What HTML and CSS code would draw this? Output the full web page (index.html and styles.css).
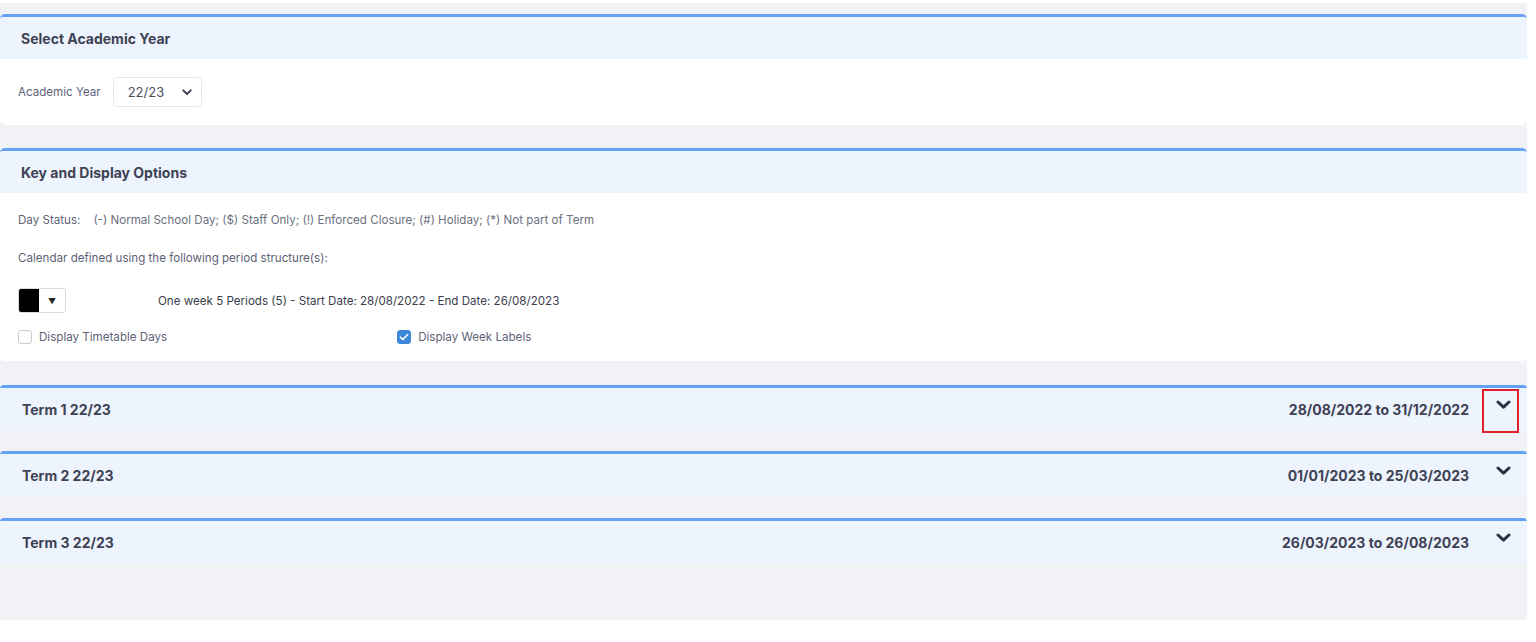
FILE: index.html
```html
<!DOCTYPE html>
<html>
<head>
<meta charset="utf-8">
<link rel="stylesheet" href="styles.css">
</head>
<body>
<div class="page">
  <section class="card card-year">
    <div class="card-head"><h2>Select Academic Year</h2></div>
    <div class="card-body year-body">
      <label class="lbl">Academic Year</label>
      <div class="select">
        <span>22/23</span>
        <svg width="10" height="7" viewBox="0 0 10 7"><path d="M1.2 1.3 L5 5 L8.8 1.3" fill="none" stroke="#3a3f4d" stroke-width="1.8" stroke-linecap="round" stroke-linejoin="round"/></svg>
      </div>
    </div>
  </section>

  <section class="card card-key">
    <div class="card-head"><h2>Key and Display Options</h2></div>
    <div class="card-body key-body">
      <div class="status"><span class="lbl">Day Status:</span><span class="keytext">(-) Normal School Day; ($) Staff Only; (!) Enforced Closure; (#) Holiday; (*) Not part of Term</span></div>
      <div class="lbl cal">Calendar defined using the following period structure(s):</div>
      <div class="struct">
        <div class="swatch"><span class="colour"></span><span class="tri">&#9660;</span></div>
        <span class="desc">One week 5 Periods (5) - Start Date: 28/08/2022 - End Date: 26/08/2023</span>
      </div>
      <div class="checks">
        <label class="chk"><span class="box"></span><span>Display Timetable Days</span></label>
        <label class="chk chk2"><span class="box on"><svg width="10" height="8" viewBox="0 0 10 8"><path d="M1.3 4.2 L3.8 6.5 L8.7 1.5" fill="none" stroke="#fff" stroke-width="1.6" stroke-linecap="round" stroke-linejoin="round"/></svg></span><span>Display Week Labels</span></label>
      </div>
    </div>
  </section>

  <section class="term term1">
    <div class="term-head">
      <h3>Term 1 22/23</h3>
      <span class="dates">28/08/2022 to 31/12/2022</span>
      <span class="chev focus"><svg width="15" height="10" viewBox="0 0 15 10"><path d="M2 2 L7.5 7.2 L13 2" fill="none" stroke="#2b3042" stroke-width="3" stroke-linecap="round" stroke-linejoin="round"/></svg></span>
    </div>
  </section>
  <section class="term term2">
    <div class="term-head">
      <h3>Term 2 22/23</h3>
      <span class="dates">01/01/2023 to 25/03/2023</span>
      <span class="chev"><svg width="15" height="10" viewBox="0 0 15 10"><path d="M2 2 L7.5 7.2 L13 2" fill="none" stroke="#2b3042" stroke-width="3" stroke-linecap="round" stroke-linejoin="round"/></svg></span>
    </div>
  </section>
  <section class="term term3">
    <div class="term-head">
      <h3>Term 3 22/23</h3>
      <span class="dates">26/03/2023 to 26/08/2023</span>
      <span class="chev"><svg width="15" height="10" viewBox="0 0 15 10"><path d="M2 2 L7.5 7.2 L13 2" fill="none" stroke="#2b3042" stroke-width="3" stroke-linecap="round" stroke-linejoin="round"/></svg></span>
    </div>
  </section>
</div>
</body>
</html>
```

FILE: styles.css
```css
* { box-sizing: border-box; }
html, body { margin: 0; padding: 0; background: #ffffff; }
body { font-family: Inter, "Noto Sans", "Liberation Sans", sans-serif; color: #3f4254; }

.page {
  margin-top: 3px;
  width: 1527px;
  height: 617px;
  background: #f1f2f6;
  padding-top: 11px;
  display: flex;
  flex-direction: column;
}

.card {
  background: #ffffff;
  border-top: 3px solid #64a2f6;
  border-radius: 5px;
  overflow: hidden;
}
.card-head {
  height: 42px;
  background: #edf4fe;
  display: flex;
  align-items: center;
  padding-left: 21px;
}
.card-head h2 {
  margin: 0;
  font-size: 14px;
  font-weight: 700;
  color: #3f4254;
}
.card-key { margin-top: 23px; }

.lbl { font-size: 11.6px; color: #5e6278; }

.year-body {
  height: 66px;
  display: flex;
  align-items: center;
  padding-left: 18px;
}
.select {
  margin-left: 12px;
  width: 89px;
  height: 30px;
  border: 1px solid #e4e6ef;
  border-radius: 4px;
  display: flex;
  align-items: center;
  justify-content: space-between;
  padding: 0 9px 0 14px;
  font-size: 13px;
  color: #4a4f5f;
}

.key-body {
  height: 168px;
  padding: 19px 18px 0 18px;
}
.status { display: flex; align-items: center; height: 16px; }
.keytext { margin-left: 13px; font-size: 11.6px; color: #6c7080; }
.cal { margin-top: 22px; height: 16px; line-height: 16px; }
.struct {
  margin-top: 22px;
  display: flex;
  align-items: center;
  height: 25px;
}
.swatch {
  width: 48px;
  height: 25px;
  border: 1px solid #d8dae3;
  border-radius: 3px;
  display: flex;
  align-items: center;
  overflow: hidden;
}
.colour { width: 20px; height: 23px; background: #000; }
.tri { flex: 1; text-align: center; font-size: 8px; color: #222; }
.desc { margin-left: 92px; font-size: 11.6px; color: #3a3e4e; }

.checks {
  margin-top: 16px;
  display: flex;
  align-items: center;
  height: 16px;
}
.chk {
  display: flex;
  align-items: center;
  font-size: 11.6px;
  color: #5e6278;
}
.chk2 { margin-left: 230px; }
.box {
  width: 14px;
  height: 14px;
  border: 1px solid #c9ccd6;
  border-radius: 3px;
  margin-right: 7px;
  background: #fff;
  display: flex;
  align-items: center;
  justify-content: center;
}
.box.on { background: #3d87d8; border-color: #3d87d8; }

.term {
  border-top: 3px solid #64a2f6;
  border-radius: 4px 4px 0 0;
}
.term1 { margin-top: 24px; }
.term2 { margin-top: 21px; }
.term3 { margin-top: 22px; }
.term-head {
  height: 42px;
  background: #edf4fe;
  display: flex;
  align-items: center;
  padding-left: 22px;
}
.term-head h3 {
  margin: 0;
  flex: 1;
  font-size: 14px;
  font-weight: 700;
  color: #3f4254;
}
.dates { font-size: 14px; font-weight: 700; color: #3f4254; }
.chev {
  width: 35px;
  margin-left: 14px;
  margin-right: 9px;
  display: flex;
  justify-content: center;
  align-self: stretch;
  padding-top: 12px;
  padding-left: 5px;
}
.chev.focus { outline: 2px solid #e0202a; outline-offset: -1px; margin-top: 2px; margin-bottom: -2px; padding-top: 10px; }
```
